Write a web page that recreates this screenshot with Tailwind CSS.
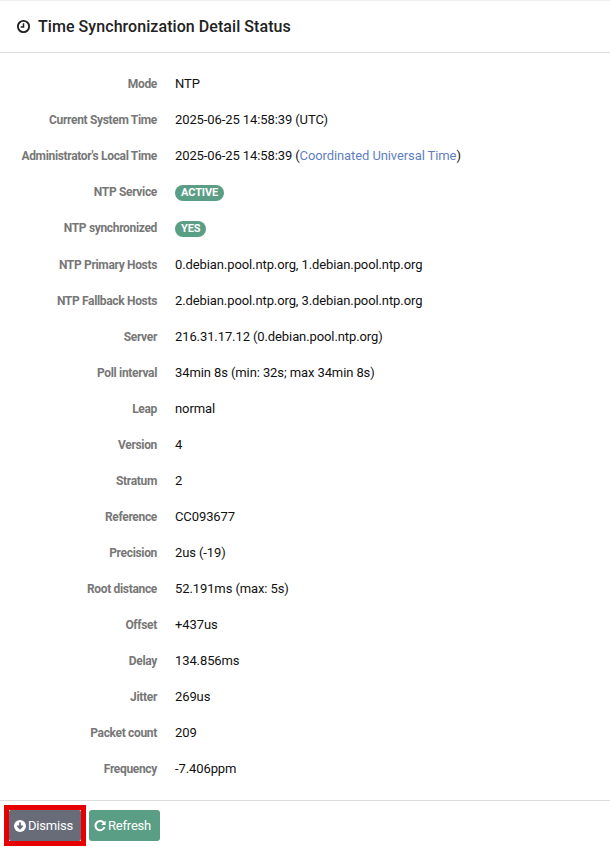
<!DOCTYPE html>
<html lang="en">
<head>
  <meta charset="UTF-8" />
  <title>Time Synchronization Detail Status</title>
  <script src="https://cdn.jsdelivr.net/npm/@tailwindcss/browser@4"></script>
</head>
<body class="bg-white font-['Roboto',sans-serif] text-[13px] text-[#111]">
  <div class="flex h-[847px] w-[610px] flex-col overflow-hidden">
    <!-- Header -->
    <header class="flex h-[53px] items-center gap-[7px] border-t border-b border-t-[#f0f0f0] border-b-[#ddd] pl-[16px]">
      <svg class="h-[15px] w-[15px]" viewBox="0 0 16 16" fill="none" stroke="#222" stroke-width="2">
        <circle cx="8" cy="8" r="6" />
        <path d="M8 4.5V8.6H5" stroke-width="1.6" />
      </svg>
      <h4 class="text-[16px] leading-none font-medium tracking-[0.06px] text-[#222]">Time Synchronization Detail Status</h4>
    </header>

    <!-- Details -->
    <dl class="grid grow grid-cols-[157px_1fr] content-start auto-rows-[minmax(36px,auto)] items-center gap-x-[18px] pt-[13px] tracking-[-0.1px]">
      <dt class="text-right text-[12px] font-bold tracking-[-0.33px] text-[#777]">Mode</dt><dd>NTP</dd>
      <dt class="text-right text-[12px] font-bold tracking-[-0.33px] text-[#777]">Current System Time</dt><dd>2025-06-25 14:58:39 (UTC)</dd>
      <dt class="text-right text-[12px] font-bold tracking-[-0.33px] text-[#777]">Administrator's Local Time</dt><dd>2025-06-25 14:58:39 (<a href="#" class="text-[#5f7fc0]">Coordinated Universal Time</a>)</dd>
      <dt class="text-right text-[12px] font-bold tracking-[-0.33px] text-[#777]">NTP Service</dt><dd><span class="inline-block rounded-full bg-[#5a9e85] px-[6px] text-[11px] leading-[16px] font-bold tracking-[-0.1px] text-white">ACTIVE</span></dd>
      <dt class="pb-[1px] text-right text-[12px] font-bold tracking-[-0.33px] text-[#777]">NTP synchronized</dt><dd class="h-[37px] pt-[11px]"><span class="block w-fit rounded-full bg-[#5a9e85] px-[6px] text-[11px] leading-[16px] font-bold tracking-[-0.1px] text-white">YES</span></dd>
      <dt class="text-right text-[12px] font-bold tracking-[-0.33px] text-[#777]">NTP Primary Hosts</dt><dd>0.debian.pool.ntp.org, 1.debian.pool.ntp.org</dd>
      <dt class="text-right text-[12px] font-bold tracking-[-0.33px] text-[#777]">NTP Fallback Hosts</dt><dd>2.debian.pool.ntp.org, 3.debian.pool.ntp.org</dd>
      <dt class="text-right text-[12px] font-bold tracking-[-0.33px] text-[#777]">Server</dt><dd>216.31.17.12 (0.debian.pool.ntp.org)</dd>
      <dt class="text-right text-[12px] font-bold tracking-[-0.33px] text-[#777]">Poll interval</dt><dd>34min 8s (min: 32s; max 34min 8s)</dd>
      <dt class="text-right text-[12px] font-bold tracking-[-0.33px] text-[#777]">Leap</dt><dd>normal</dd>
      <dt class="text-right text-[12px] font-bold tracking-[-0.33px] text-[#777]">Version</dt><dd>4</dd>
      <dt class="text-right text-[12px] font-bold tracking-[-0.33px] text-[#777]">Stratum</dt><dd>2</dd>
      <dt class="text-right text-[12px] font-bold tracking-[-0.33px] text-[#777]">Reference</dt><dd>CC093677</dd>
      <dt class="text-right text-[12px] font-bold tracking-[-0.33px] text-[#777]">Precision</dt><dd>2us (-19)</dd>
      <dt class="text-right text-[12px] font-bold tracking-[-0.33px] text-[#777]">Root distance</dt><dd>52.191ms (max: 5s)</dd>
      <dt class="text-right text-[12px] font-bold tracking-[-0.33px] text-[#777]">Offset</dt><dd>+437us</dd>
      <dt class="text-right text-[12px] font-bold tracking-[-0.33px] text-[#777]">Delay</dt><dd>134.856ms</dd>
      <dt class="text-right text-[12px] font-bold tracking-[-0.33px] text-[#777]">Jitter</dt><dd>269us</dd>
      <dt class="text-right text-[12px] font-bold tracking-[-0.33px] text-[#777]">Packet count</dt><dd>209</dd>
      <dt class="text-right text-[12px] font-bold tracking-[-0.33px] text-[#777]">Frequency</dt><dd>-7.406ppm</dd>
    </dl>

    <!-- Footer -->
    <footer class="flex h-[47px] items-start gap-[3px] border-t border-[#ddd] pt-[4px] pl-[4px]">
      <div class="border-[5px] border-[#e60000]">
        <button class="flex h-[31px] w-[72px] items-center gap-[2px] rounded-[2px] bg-[#686c78] pl-[5px] text-[13px] tracking-[-0.2px] text-white">
          <svg class="h-[12px] w-[12px]" viewBox="0 0 12 12"><circle cx="6" cy="6" r="6" fill="#fff" /><path d="M6 2.5V8M3.4 5.6 6 8.4 8.6 5.6" fill="none" stroke="#686c78" stroke-width="1.8" /></svg>
          Dismiss
        </button>
      </div>
      <button class="mt-[5px] flex h-[31px] w-[71px] items-center gap-[2px] rounded-[3px] bg-[#5a9e85] pl-[5px] text-[13px] tracking-[-0.2px] text-white">
        <svg class="h-[12px] w-[12px]" viewBox="0 0 12 12" fill="none"><path d="M10 3.2A4.6 4.6 0 1 0 10.5 7" stroke="#fff" stroke-width="2" /><path d="M11.6.6V5H7.2Z" fill="#fff" /></svg>
        Refresh
      </button>
    </footer>
  </div>
</body>
</html>
